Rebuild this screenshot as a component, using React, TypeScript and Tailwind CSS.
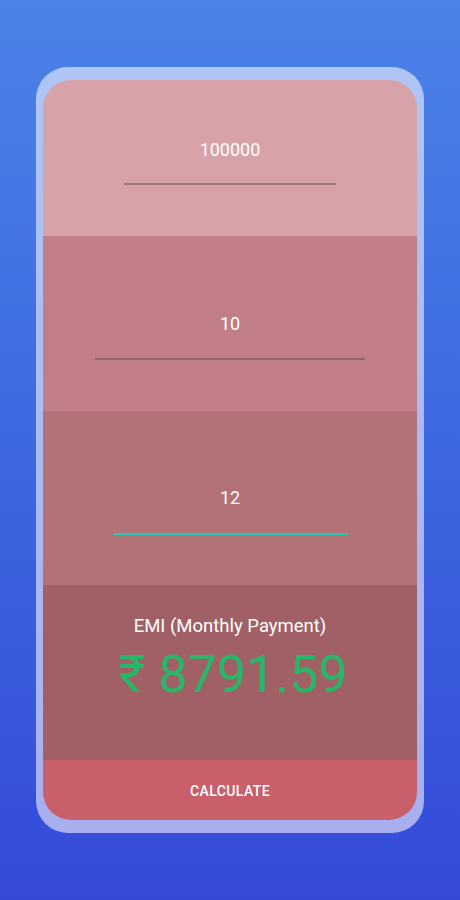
import React from 'react';

const font = { fontFamily: 'Roboto, "Noto Sans", sans-serif' };

interface FieldProps {
  value: string;
  bg: string;
  height: string;
  top: string;
  line: string;
}

const Field: React.FC<FieldProps> = ({ value, bg, height, top, line }) => (
  <div className={`${bg} ${height} ${top} flex flex-col items-center`}>
    <div className="text-[18px] leading-6 text-white">{value}</div>
    <div className={line}></div>
  </div>
);

export default function App() {
  return (
    <div
      className="min-h-[900px] bg-gradient-to-b from-[#4b83e7] to-[#3549d9] px-[36px] pt-[67px]"
      style={font}
    >
      <div className="rounded-[32px] bg-gradient-to-b from-[#aec6f5] to-[#a7afee] px-[7px] py-[13px]">
        <div className="flex flex-col overflow-hidden rounded-[28px]">
          <Field
            value="100000"
            bg="bg-[#d8a3a8]"
            height="h-[156px]"
            top="pt-[58px]"
            line="mt-[21px] h-[2px] w-[212px] bg-[#a07a7e]"
          />
          <Field
            value="10"
            bg="bg-[#c17e86]"
            height="h-[175px]"
            top="pt-[76px]"
            line="mt-[22px] h-[2px] w-[270px] bg-[#8e656a]"
          />
          <Field
            value="12"
            bg="bg-[#b37178]"
            height="h-[174px]"
            top="pt-[75px]"
            line="mt-[23px] h-[2px] w-[235px] bg-[#1ecbb5]"
          />
          <div className="flex h-[175px] flex-col items-center bg-[#a16066] pt-[29px]">
            <div className="text-[18.5px] leading-6 text-white">EMI (Monthly Payment)</div>
            <div className="mt-[7px] pl-[6px] text-[52px] leading-[60px] text-[#26b86a]">₹ 8791.59</div>
          </div>
          <button className="flex h-[60px] items-center justify-center bg-[#c85f6b] pt-[2px] text-[14px] font-medium tracking-[0.03em] text-white">
            CALCULATE
          </button>
        </div>
      </div>
    </div>
  );
}
